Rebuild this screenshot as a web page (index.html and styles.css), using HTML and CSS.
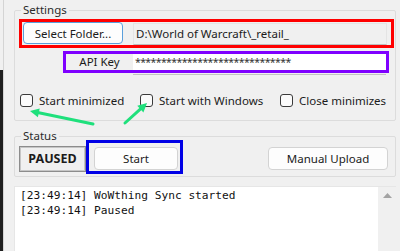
FILE: index.html
```html
<!DOCTYPE html>
<html>
<head>
<meta charset="utf-8">
<link rel="stylesheet" href="styles.css">
</head>
<body>
<div class="edge"></div>
<div class="main">
  <fieldset class="group settings">
    <legend>Settings</legend>
    <div class="folder-row">
      <button class="btn btn-focus select">Select Folder...</button>
      <div class="path">D:\World of Warcraft\_retail_</div>
    </div>
    <div class="api-row">
      <span class="api-label">API Key</span>
      <span class="api-input">******************************</span>
    </div>
    <div class="api-line"></div>
    <div class="checks">
      <div class="check"><span class="cb"></span><span>Start minimized</span></div>
      <div class="check"><span class="cb"></span><span>Start with Windows</span></div>
      <div class="check"><span class="cb"></span><span>Close minimizes</span></div>
    </div>
  </fieldset>
  <fieldset class="group status">
    <legend>Status</legend>
    <div class="status-row">
      <div class="state">PAUSED</div>
      <div class="start-wrap"><button class="btn start">Start</button></div>
      <button class="btn upload">Manual Upload</button>
    </div>
  </fieldset>
  <div class="log">
    <div class="log-text">[23:49:14] WoWthing Sync started
[23:49:14] Paused</div>
    <div class="scroll"><svg class="up" width="9" height="5" viewBox="0 0 9 5"><polygon points="0,5 4.5,0 9,5" fill="#a3a3a3"/></svg></div>
  </div>
</div>
<svg class="arrows" width="400" height="251" viewBox="0 0 400 251">
  <line x1="93" y1="124" x2="38.8" y2="112.8" stroke="#1fe07c" stroke-width="3" stroke-linecap="round"/>
  <polygon points="30,111 39.7,108.4 37.9,117.2" fill="#1fe07c"/>
  <line x1="125" y1="123" x2="140.3" y2="109.1" stroke="#1fe07c" stroke-width="3" stroke-linecap="round"/>
  <polygon points="147,103 143.4,112.4 137.3,105.7" fill="#1fe07c"/>
</svg>
</body>
</html>
```
FILE: styles.css
```css
* { box-sizing: border-box; }
html, body { margin: 0; }
body {
  width: 400px;
  height: 251px;
  overflow: hidden;
  background: #f0f0f0;
  display: flex;
  position: relative;
  font-family: "Noto Sans", "Open Sans", sans-serif;
  font-size: 11.5px;
  color: #1b1b1b;
}
.edge {
  width: 4px;
  flex: none;
  background: linear-gradient(#f0f0f0 0 70px, #1e1e1e 70px);
  border-right: 1px solid #d4d4d4;
}
.main {
  flex: 1;
  padding: 0 4px 0 10px;
}
.group {
  margin: 0;
  border: 1px solid #dcdcdc;
  border-radius: 2px;
  padding: 0 1px 0 4px;
  min-width: 0;
}
legend {
  padding: 0 2px;
  margin-left: 2px;
  line-height: 10px;
  color: #2b2b2b;
}
.settings {
  margin-top: 5px;
  padding-top: 4px;
  padding-bottom: 13px;
}
.folder-row {
  display: flex;
  align-items: flex-start;
  gap: 10px;
  border: 3px solid #ff0000;
  height: 29px;
  padding-left: 1px;
}
.btn {
  font: inherit;
  color: inherit;
  background: #fdfdfd;
  border: 1px solid #d3d3d3;
  border-radius: 4px;
  padding: 0;
}
.btn-focus { border-color: #5a9fdc; }
.select { width: 100px; height: 22px; }
.path {
  margin-top: 1px;
  width: 254px;
  height: 22px;
  background: #f0f0f0;
  border: 1px solid #e4e4e4;
  border-bottom-color: #bdbdbd;
  padding-left: 2px;
  line-height: 20px;
  white-space: nowrap;
}
.api-row {
  display: flex;
  margin: 3px 0 0 44px;
  width: 326px;
  height: 22px;
  border: 3px solid #7f00ff;
}
.api-label {
  width: 67px;
  text-align: center;
  line-height: 16px;
}
.api-input {
  flex: 1;
  background: #fff;
  line-height: 16px;
  padding-left: 2px;
  white-space: nowrap;
  overflow: hidden;
  font-size: 10.5px;
  letter-spacing: -0.6px;
  color: #333;
}
.api-line {
  margin: 1px 0 0 114px;
  width: 253px;
  height: 1px;
  background: #c2c2c2;
}
.checks {
  display: grid;
  grid-template-columns: 120px 140px auto;
  margin: 19px 0 0 1px;
  height: 13px;
}
.check {
  display: flex;
  align-items: center;
  gap: 6px;
  line-height: 13px;
  white-space: nowrap;
}
.cb {
  width: 13px;
  height: 13px;
  flex: none;
  border: 1px solid #3a3a3a;
  border-radius: 3px;
  background: #fbfbfb;
}
.status {
  margin-top: 10px;
  padding-bottom: 2px;
}
.status-row {
  display: flex;
  align-items: flex-start;
  margin-top: -1px;
}
.state {
  width: 67px;
  height: 26px;
  margin-top: 6px;
  border: 1px solid #8c8c8c;
  box-shadow: inset 0 0 0 1px #c6c6c6;
  font-weight: bold;
  font-size: 12.5px;
  text-align: center;
  line-height: 24px;
}
.start-wrap {
  width: 97px;
  height: 34px;
  border: 3px solid #0000e6;
  padding: 4px 2px 1px 5px;
}
.start { width: 84px; height: 23px; }
.upload {
  margin: 7px 6px 0 auto;
  width: 120px;
  height: 23px;
}
.log {
  margin-top: 9px;
  height: 66px;
  background: #fff;
  border-top: 1px solid #e6e6e6;
  border-left: 1px solid #e6e6e6;
  display: flex;
}
.log-text {
  flex: 1;
  padding: 1px 0 0 5px;
  font-family: "DejaVu Sans Mono", "Liberation Mono", monospace;
  font-size: 11.2px;
  line-height: 15px;
  color: #111;
  white-space: pre;
}
.scroll {
  width: 18px;
  flex: none;
  background: #f0f0f0;
  display: flex;
  justify-content: center;
  align-items: flex-start;
  padding-top: 6px;
}
.up { display: block; }
.arrows {
  position: absolute;
  left: 0;
  top: 0;
  pointer-events: none;
}
```
